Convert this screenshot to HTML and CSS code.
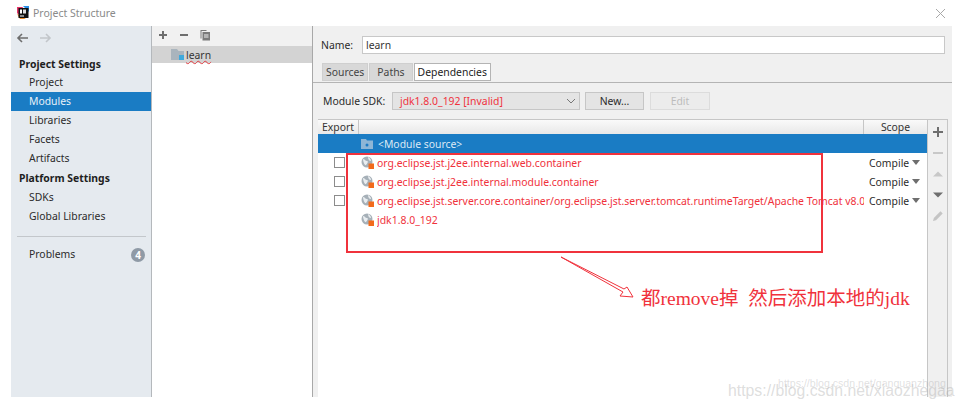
FILE: index.html
```html
<!DOCTYPE html>
<html lang="en">
<head>
    <meta charset="UTF-8">
    <title>Project Structure</title>
    <link rel="stylesheet" href="styles.css">
</head>
<body>
    <div class="window">
        <header class="titlebar">
            <svg class="logo" width="14" height="14" viewBox="0 0 14 14">
                <path d="M1 1h6L3 9 1 7z" fill="#e8356a"/>
                <path d="M7 0h6v6z" fill="#2b8fe8"/>
                <path d="M1 8l3 5h6z" fill="#f08a24"/>
                <rect x="2.500" y="2" width="10" height="10" fill="#111"/>
                <rect x="4" y="9.500" width="4" height="1" fill="#fff"/>
                <rect x="4" y="3.500" width="2" height="4" fill="#fff"/>
                <rect x="7" y="3.500" width="3" height="4" fill="#ddd"/>
            </svg>
            <span class="title">Project Structure</span>
            <svg class="close" width="11" height="11" viewBox="0 0 11 11"><path d="M1 1l9 9M10 1l-9 9" stroke="#a8a8a8" fill="none"/></svg>
        </header>

        <div class="main">
            <nav class="sidebar">
                <div class="nav-arrows">
                    <svg width="13" height="10" viewBox="0 0 13 10"><path d="M12 5H2M6 1L2 5l4 4" stroke="#6e6e6e" stroke-width="1.600" fill="none"/></svg>
                    <svg width="13" height="10" viewBox="0 0 13 10"><path d="M1 5h10M7 1l4 4-4 4" stroke="#c2c6ca" stroke-width="1.600" fill="none"/></svg>
                </div>
                <div class="nav-head first">Project Settings</div>
                <a class="nav-item">Project</a>
                <a class="nav-item active">Modules</a>
                <a class="nav-item">Libraries</a>
                <a class="nav-item">Facets</a>
                <a class="nav-item">Artifacts</a>
                <div class="nav-head second">Platform Settings</div>
                <a class="nav-item">SDKs</a>
                <a class="nav-item">Global Libraries</a>
                <div class="nav-sep"></div>
                <a class="nav-item problems">Problems <span class="badge">4</span></a>
            </nav>

            <section class="modules">
                <div class="mod-tools">
                    <svg width="12" height="12" viewBox="0 0 12 12"><path d="M6 2v8M2 6h8" stroke="#6e6e6e" stroke-width="2" fill="none"/></svg>
                    <svg width="12" height="12" viewBox="0 0 12 12"><path d="M2 6h8" stroke="#6e6e6e" stroke-width="2" fill="none"/></svg>
                    <svg width="12" height="12" viewBox="0 0 12 12"><path d="M1.500 1v8.500h1V2h5V1z" fill="#7a7a7a"/><rect x="3.500" y="3" width="7.500" height="8.500" fill="#7a7a7a"/><path d="M5 6h4.500M5 8h4.500" stroke="#eee"/></svg>
                </div>
                <div class="mod-row">
                    <svg class="folder" width="16" height="14" viewBox="0 0 16 14"><path d="M0 1h6l1.500 2H13v9H0z" fill="#a9b4bd"/><rect x="8" y="7" width="5" height="5" fill="#3fa9dc"/></svg>
                    <span class="spell">learn</span>
                </div>
            </section>

            <section class="detail">
                <div class="name-row">
                    <label>Name:</label>
                    <input class="name-input" value="learn">
                </div>
                <div class="tabs">
                    <span class="tab">Sources</span>
                    <span class="tab">Paths</span>
                    <span class="tab current">Dependencies</span>
                </div>
                <div class="sdk-row">
                    <label>Module SDK:</label>
                    <div class="select">jdk1.8.0_192 [Invalid]
                        <svg width="10" height="6" viewBox="0 0 10 6"><path d="M1 1l4 4 4-4" stroke="#777" fill="none"/></svg>
                    </div>
                    <button class="btn">New...</button>
                    <button class="btn disabled">Edit</button>
                </div>

                <div class="deps">
                    <div class="table">
                        <div class="thead">
                            <span class="th-export">Export</span>
                            <span class="th-mid"></span>
                            <span class="th-scope">Scope</span>
                        </div>
                        <div class="row selected">
                            <svg class="row-icon" width="12" height="10" viewBox="0 0 12 10"><path d="M0 0h5l1 1.500h6V10H0z" fill="#8db6d6"/><circle cx="6" cy="6" r="1.500" fill="#1b7bc4"/></svg>
                            <span class="row-name">&lt;Module source&gt;</span>
                        </div>
                        <div class="row">
                            <span class="check"></span>
                            <svg class="globe" width="13" height="13" viewBox="0 0 13 13"><use href="#globe"/></svg>
                            <span class="row-name bad">org.eclipse.jst.j2ee.internal.web.container</span>
                            <span class="scope">Compile <i class="tri"></i></span>
                        </div>
                        <div class="row">
                            <span class="check"></span>
                            <svg class="globe" width="13" height="13" viewBox="0 0 13 13"><use href="#globe"/></svg>
                            <span class="row-name bad">org.eclipse.jst.j2ee.internal.module.container</span>
                            <span class="scope">Compile <i class="tri"></i></span>
                        </div>
                        <div class="row">
                            <span class="check"></span>
                            <svg class="globe" width="13" height="13" viewBox="0 0 13 13"><use href="#globe"/></svg>
                            <span class="row-name bad">org.eclipse.jst.server.core.container/org.eclipse.jst.server.tomcat.runtimeTarget/Apache Tomcat v8.0</span>
                            <span class="scope">Compile <i class="tri"></i></span>
                        </div>
                        <div class="row">
                            <span class="check none"></span>
                            <svg class="globe" width="13" height="13" viewBox="0 0 13 13"><use href="#globe"/></svg>
                            <span class="row-name bad">jdk1.8.0_192</span>
                        </div>
                    </div>
                    <aside class="dep-tools">
                        <svg width="12" height="12" viewBox="0 0 12 12"><path d="M6 1v10M1 6h10" stroke="#6e6e6e" stroke-width="2" fill="none"/></svg>
                        <svg width="12" height="12" viewBox="0 0 12 12"><path d="M1 6h10" stroke="#c8c8c8" stroke-width="2" fill="none"/></svg>
                        <svg width="12" height="12" viewBox="0 0 12 12"><path d="M1 8.500L6 3.500l5 5z" fill="#c8c8c8"/></svg>
                        <svg width="12" height="12" viewBox="0 0 12 12"><path d="M1 3.500l5 5 5-5z" fill="#6e6e6e"/></svg>
                        <svg width="12" height="12" viewBox="0 0 12 12"><path d="M1 11l.8-3L8.500 1.300l2.200 2.200L4 10.200z" fill="#c4c4c4"/></svg>
                    </aside>
                </div>
            </section>
        </div>
    </div>

    <svg class="defs" width="0" height="0">
        <symbol id="globe" viewBox="0 0 13 13">
            <circle cx="6" cy="6" r="5.500" fill="#a6b0b8"/>
            <path d="M2 3c2 0 2 2 4 2s0 3-1 4S2 6 2 3zM7 1c2 1 3 2 3 4-2 0-3-2-3-4z" fill="#e9edf0"/>
            <rect x="7.500" y="7.500" width="5.500" height="5.500" fill="#f26a1b"/>
        </symbol>
    </svg>

    <!-- red annotations pasted on top of the screenshot -->
    <div class="mark-box"></div>
    <svg class="mark-arrow" width="80" height="50" viewBox="0 0 80 50">
        <path d="M1 1L64 33L67 31L73 41L60 40L63 36z" fill="#fff" stroke="#f0323c" stroke-width="1"/>
    </svg>
    <div class="mark-note">都remove掉&nbsp;&nbsp;然后添加本地的jdk</div>
    <div class="wm wm-back">https://blog.csdn.net/ganquanzhong</div>
    <div class="wm wm-front">https://blog.csdn.net/xiaozhegaa</div>
</body>
</html>
```

FILE: styles.css
```css
* {
    margin: 0;
    padding: 0;
    box-sizing: border-box;
}

body {
    width: 965px;
    height: 410px;
    overflow: hidden;
    background: #fff;
    font-family: 'Noto Sans', sans-serif;
    font-size: 10.400px;
    color: #2b2b2b;
    position: relative;
}

.window {
    width: 941px;
    height: 397px;
    margin-left: 11px;
    display: flex;
    flex-direction: column;
}

.titlebar {
    height: 26px;
    display: flex;
    align-items: center;
    gap: 3px;
    margin-left: 5px;
}

.title {
    color: #8a8a8a;
    font-size: 10.500px;
}

.close {
    margin-left: auto;
    margin-right: 6px;
}

.main {
    flex: 1;
    display: flex;
    min-height: 0;
}

/* left nav */
.sidebar {
    width: 141px;
    background: #e5eaef;
    border-right: 1px solid #b4b8bc;
}

.nav-arrows {
    height: 29px;
    padding: 0 0 6px 5px;
    display: flex;
    align-items: center;
    gap: 10px;
}

.nav-head {
    height: 19px;
    line-height: 19px;
    padding-left: 8px;
    font-weight: bold;
    color: #1e1e1e;
}

.nav-head.first {
    height: 18px;
}

.nav-head.second {
    margin-top: 1px;
}

.nav-item {
    display: block;
    height: 19px;
    line-height: 19px;
    padding-left: 18px;
}

.nav-item.active {
    background: #1a7cc4;
    color: #e8f1f8;
}

.nav-sep {
    height: 1px;
    margin: 10px 5px 8px 6px;
    background: #c3c7cb;
}

.problems {
    display: flex;
    align-items: center;
    justify-content: space-between;
    padding-right: 6px;
}

.badge {
    width: 14px;
    height: 14px;
    border-radius: 50%;
    background: #8f9aa6;
    color: #fff;
    font-size: 10px;
    font-weight: bold;
    line-height: 14px;
    text-align: center;
}

/* module list */
.modules {
    width: 161px;
    background: #fff;
    border-right: 1px solid #a8a8a8;
}

.mod-tools {
    height: 20px;
    background: #f1f1f1;
    display: flex;
    align-items: center;
    gap: 9px;
    padding: 0 0 2px 5px;
}

.mod-row {
    height: 17px;
    background: #d3d3d3;
    display: flex;
    align-items: center;
    padding-left: 19px;
    color: #333;
}

.folder {
    margin-right: -1px;
}

.spell {
    text-decoration: underline wavy #e0393e 1px;
    text-underline-offset: 1px;
}

/* right part */
.detail {
    flex: 1;
    display: flex;
    flex-direction: column;
    background: #f0f0f0;
    min-width: 0;
}

.name-row {
    height: 37px;
    display: flex;
    align-items: center;
    padding: 0 7px 0 8px;
}

.name-row label {
    width: 41px;
}

.name-input {
    flex: 1;
    height: 18px;
    border: 1px solid #c8c8c8;
    padding-left: 3px;
    font: inherit;
    color: #333;
    background: #fff;
}

.tabs {
    height: 20px;
    padding-left: 9px;
    display: flex;
    gap: 1px;
    border-bottom: 1px solid #b4b4b4;
}

.tab {
    height: 18px;
    line-height: 17px;
    padding: 0 3px;
    background: #d8d8d8;
    border: 1px solid #cfcfcf;
    color: #444;
}

.tab:nth-child(2) {
    padding: 0 7px;
}

.tab.current {
    background: #fff;
    border-color: #b4b4b4;
    color: #222;
}

.sdk-row {
    height: 36px;
    display: flex;
    align-items: center;
    padding-left: 10px;
}

.sdk-row label {
    width: 69px;
}

.select {
    width: 188px;
    height: 18px;
    line-height: 16px;
    padding-left: 7px;
    border: 1px solid #c6c6c6;
    background: #e4e4e4;
    color: #f0323c;
    display: flex;
    justify-content: space-between;
    align-items: center;
}

.select svg {
    margin-right: 3px;
}

.btn {
    width: 59px;
    height: 18px;
    margin-left: 5px;
    border: 1px solid #c6c6c6;
    background: #e4e4e4;
    font: inherit;
    color: #2b2b2b;
}

.btn.disabled {
    width: 60px;
    margin-left: 6px;
    background: #ececec;
    border-color: #dcdcdc;
    color: #bcbcbc;
}

.deps {
    flex: 1;
    display: flex;
    margin: 0 4px 0 5px;
    border-top: 1px solid #c6c6c6;
    min-height: 0;
}

.table {
    width: 609px;
    background: #fff;
}

.thead {
    height: 14px;
    display: flex;
    line-height: 14px;
    background: linear-gradient(#fafafa, #e8e8e8);
    color: #333;
}

.th-export {
    width: 41px;
    padding-left: 4px;
    border-right: 1px solid #c6c6c6;
}

.th-mid {
    width: 505px;
    border-right: 1px solid #c6c6c6;
}

.th-scope {
    flex: 1;
    text-align: center;
}

.row {
    height: 19px;
    display: flex;
    align-items: center;
}

.row.selected {
    background: #1a7cc4;
    color: #dce9f4;
}

.check {
    width: 11px;
    height: 11px;
    margin-left: 16px;
    border: 1px solid #8c8c8c;
    background: #fff;
    flex: none;
}

.check.none {
    visibility: hidden;
}

.globe {
    margin-left: 16px;
    flex: none;
}

.row-icon {
    margin-left: 43px;
    flex: none;
}

.row-name {
    margin-left: 3px;
    width: 487px;
    overflow: hidden;
    white-space: nowrap;
    flex: none;
}

.selected .row-name {
    margin-left: 5px;
}

.bad {
    color: #f0323c;
    font-size: 10.450px;
}

.scope {
    margin-left: 5px;
    white-space: nowrap;
    display: flex;
    align-items: center;
    gap: 3px;
}

.tri {
    width: 0;
    height: 0;
    border-left: 4px solid transparent;
    border-right: 4px solid transparent;
    border-top: 5px solid #6e6e6e;
}

.dep-tools {
    width: 21px;
    border-left: 1px solid #c6c6c6;
    border-right: 1px solid #c6c6c6;
    display: flex;
    flex-direction: column;
    align-items: center;
    padding-top: 6px;
    gap: 9px;
}

.defs {
    position: absolute;
}

/* overlays */
.mark-box {
    position: absolute;
    left: 346px;
    top: 153px;
    width: 477px;
    height: 100px;
    border: 2px solid #f0323c;
}

.mark-arrow {
    position: absolute;
    left: 560px;
    top: 256px;
}

.mark-note {
    position: absolute;
    left: 641px;
    top: 287px;
    font-family: 'Liberation Serif', 'Noto Sans CJK SC', serif;
    font-size: 19.500px;
    line-height: 24px;
    color: #f0323c;
    white-space: nowrap;
}

.wm {
    position: absolute;
    font-family: 'Liberation Sans', sans-serif;
    white-space: nowrap;
}

.wm-back {
    left: 778px;
    top: 377px;
    font-size: 10.600px;
    color: rgba(150, 150, 150, 0.3);
}

.wm-front {
    left: 728px;
    top: 382px;
    font-size: 15.800px;
    color: rgba(170, 170, 170, 0.4);
}
```
